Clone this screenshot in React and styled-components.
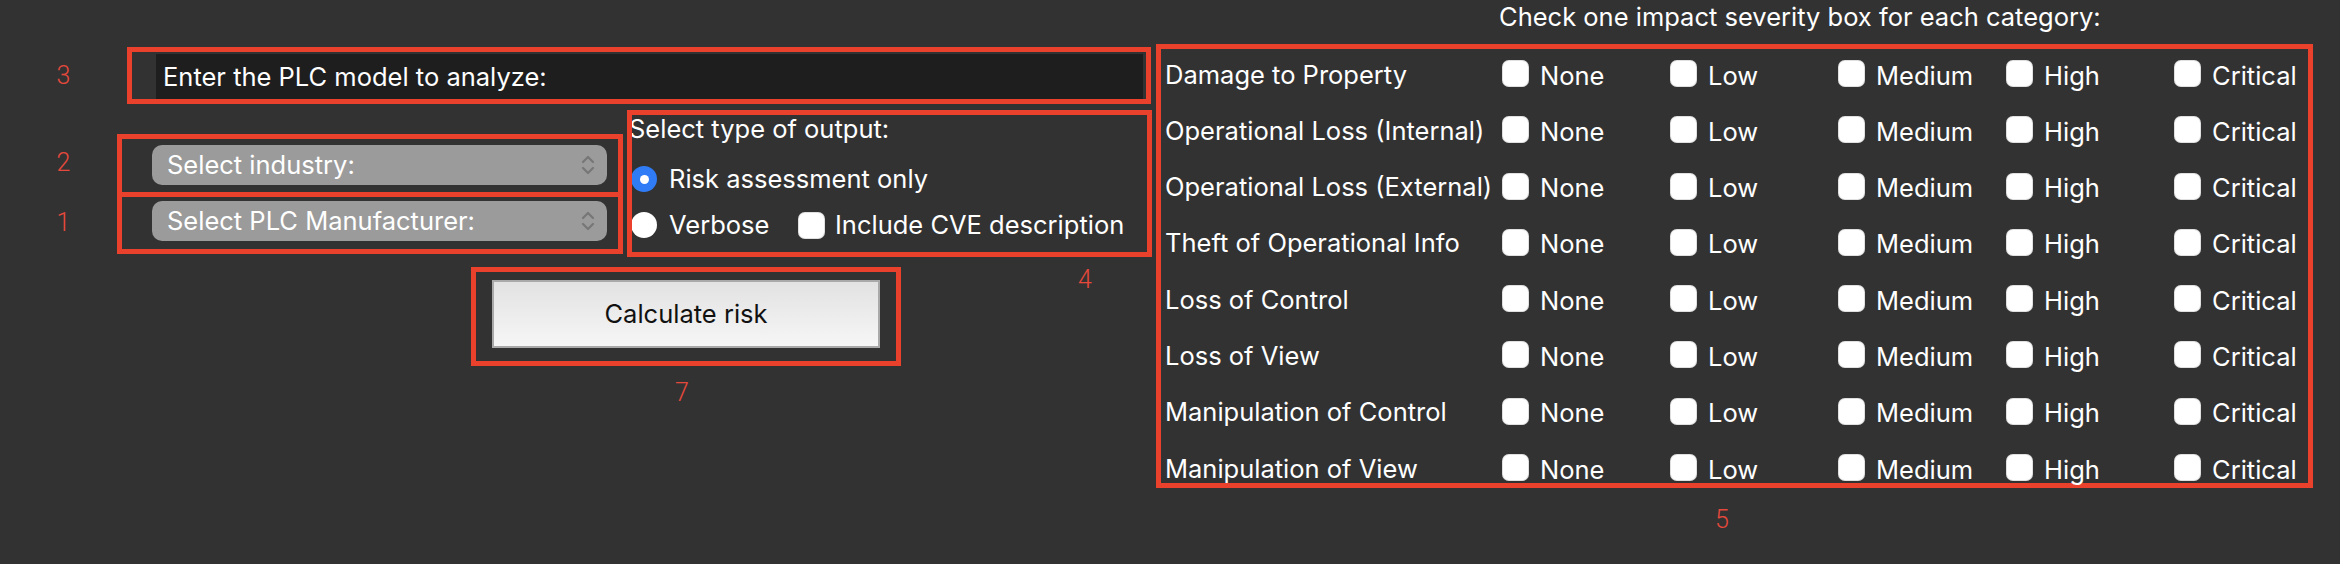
import React from "react";
import styled, { createGlobalStyle } from "styled-components";

const RED = "#e9412b";

const GlobalStyle = createGlobalStyle`
  html, body { margin: 0; padding: 0; background: #323232; }
  body {
    width: 2340px; height: 564px; overflow: hidden;
    font-family: Inter, "Noto Sans", sans-serif; font-size: 25.5px; color: #fff;
  }
  * { box-sizing: border-box; }
`;

const Page = styled.div`
  display: flex;
  align-items: flex-start;
  width: 2340px;
  height: 564px;
`;

const LeftPanel = styled.div`
  flex: none;
  width: 1156px;
  display: flex;
  flex-direction: column;
  padding-top: 47px;
`;

const RightPanel = styled.div`
  flex: none;
  width: 1157px;
  display: flex;
  flex-direction: column;
`;

const Row = styled.div`
  display: flex;
  align-items: ${(p) => p.$align || "flex-start"};
  margin-top: ${(p) => p.$mt || 0}px;
`;

const Stack = styled.div`
  flex: none;
  display: flex;
  flex-direction: column;
  width: ${(p) => p.$w}px;
  padding-top: ${(p) => p.$pt || 0}px;
`;

const NumLabel = styled.div`
  flex: none;
  width: ${(p) => p.$w || 30}px;
  margin-left: ${(p) => p.$ml || 0}px;
  margin-top: ${(p) => p.$mt || 0}px;
  padding-left: ${(p) => p.$pl || 0}px;
  text-align: center;
  font-family: Roboto, "Liberation Sans", sans-serif;
  font-weight: 300;
  font-size: 25px;
  line-height: 26px;
  color: #e6493c;
`;

const RedBox = styled.div`
  flex: none;
  width: ${(p) => p.$w}px;
  height: ${(p) => p.$h}px;
  border: 5px solid ${RED};
  ${(p) => (p.$noBottom ? "border-bottom: none;" : "")}
`;

const FieldBox = styled(RedBox)`
  padding: 2px 3px 0 24px;
`;

const TextField = styled.div`
  height: 45px;
  background: #1e1e1e;
  display: flex;
  align-items: center;
  padding-left: 7px;
  line-height: 26px;
`;

const SelectBox = styled(RedBox)`
  padding: ${(p) => p.$pt}px 11px 0 30px;
`;

const Select = styled.div`
  height: 40px;
  border-radius: 10px;
  background: #9b9b9b;
  display: flex;
  align-items: center;
  justify-content: space-between;
  padding: 0 12px 0 15px;
  line-height: 26px;
`;

const OutputBox = styled(RedBox)`
  margin-left: 4px;
  overflow: hidden;
  display: flex;
  flex-direction: column;
`;

const BoxTitle = styled.div`
  line-height: 26px;
  margin-top: 1px;
  margin-left: -3px;
  white-space: nowrap;
`;

const OptionRow = styled.div`
  display: flex;
  align-items: center;
  height: 30px;
  margin-top: ${(p) => p.$mt}px;
  margin-left: -1px;
`;

const Choice = styled.div`
  flex: none;
  display: flex;
  align-items: center;
  gap: ${(p) => p.$gap || 12}px;
  width: ${(p) => (p.$w ? p.$w + "px" : "auto")};
  white-space: nowrap;
  line-height: 26px;
`;

const Radio = styled.span`
  flex: none;
  width: 26px;
  height: 26px;
  border-radius: 50%;
  background: ${(p) => (p.$on ? "#2f7cf6" : "#ffffff")};
  display: flex;
  align-items: center;
  justify-content: center;
  &::after {
    content: "";
    display: ${(p) => (p.$on ? "block" : "none")};
    width: 9px;
    height: 9px;
    border-radius: 50%;
    background: #fff;
  }
`;

const Check = styled.span`
  flex: none;
  width: 27px;
  height: 27px;
  border-radius: 7px;
  background: #fff;
  box-shadow: inset 0 0 0 1px rgba(0, 0, 0, 0.12);
`;

const ButtonBox = styled(RedBox)`
  margin-left: 471px;
  display: flex;
  justify-content: center;
  padding-top: 8px;
`;

const Button = styled.div`
  width: 388px;
  height: 68px;
  border: 2px solid #a9a9a9;
  background: linear-gradient(#e2e2e2, #f6f6f6);
  color: #111;
  display: flex;
  align-items: center;
  justify-content: center;
  line-height: 26px;
`;

const Title = styled.div`
  margin-top: 4px;
  padding-left: 343px;
  line-height: 26px;
  white-space: nowrap;
`;

const ImpactBox = styled(RedBox)`
  margin-top: 14px;
  display: grid;
  grid-template-columns: 337px repeat(4, 168px) 1fr;
  grid-auto-rows: 42px;
  row-gap: 14.3px;
  padding: 3.5px 0 0 4px;
  align-items: center;
`;

const CatLabel = styled.div`
  line-height: 26px;
  white-space: nowrap;
  position: relative;
  top: 1px;
`;

const Option = styled.div`
  display: flex;
  align-items: center;
  gap: 11px;
  line-height: 26px;
  white-space: nowrap;
  & > span:last-child {
    position: relative;
    top: 2px;
  }
`;

const Chevrons = () => (
  <svg width="14" height="24" viewBox="0 0 14 24" fill="none">
    <path d="M2 9 L7 4 L12 9" stroke="#777" strokeWidth="2.2" strokeLinecap="round" strokeLinejoin="round" />
    <path d="M2 15 L7 20 L12 15" stroke="#777" strokeWidth="2.2" strokeLinecap="round" strokeLinejoin="round" />
  </svg>
);

const categories = [
  "Damage to Property",
  "Operational Loss (Internal)",
  "Operational Loss (External)",
  "Theft of Operational Info",
  "Loss of Control",
  "Loss of View",
  "Manipulation of Control",
  "Manipulation of View",
];

const levels = ["None", "Low", "Medium", "High", "Critical"];

export default function App() {
  return (
    <>
      <GlobalStyle />
      <Page>
        <LeftPanel>
          <Row $align="center">
            <NumLabel $w={127}>3</NumLabel>
            <FieldBox $w={1024} $h={57}>
              <TextField>Enter the PLC model to analyze:</TextField>
            </FieldBox>
          </Row>

          <Row $mt={6}>
            <Stack $w={623} $pt={24}>
              <Row $align="center">
                <NumLabel $w={117} $pl={10}>2</NumLabel>
                <SelectBox $w={506} $h={58} $pt={6} $noBottom>
                  <Select>
                    <span>Select industry:</span>
                    <Chevrons />
                  </Select>
                </SelectBox>
              </Row>
              <Row $align="center">
                <NumLabel $w={117} $pl={10}>1</NumLabel>
                <SelectBox $w={506} $h={62} $pt={4}>
                  <Select>
                    <span>Select PLC Manufacturer:</span>
                    <Chevrons />
                  </Select>
                </SelectBox>
              </Row>
            </Stack>

            <OutputBox $w={525} $h={147}>
              <BoxTitle>Select type of output:</BoxTitle>
              <OptionRow $mt={22}>
                <Choice>
                  <Radio $on />
                  <span>Risk assessment only</span>
                </Choice>
              </OptionRow>
              <OptionRow $mt={16}>
                <Choice $w={167}>
                  <Radio />
                  <span>Verbose</span>
                </Choice>
                <Choice $gap={10}>
                  <Check />
                  <span>Include CVE description</span>
                </Choice>
              </OptionRow>
            </OutputBox>
          </Row>

          <Row $mt={10}>
            <ButtonBox $w={430} $h={99}>
              <Button>Calculate risk</Button>
            </ButtonBox>
            <NumLabel $ml={169} $mt={0}>4</NumLabel>
          </Row>

          <Row $mt={14}>
            <NumLabel $ml={667}>7</NumLabel>
          </Row>
        </LeftPanel>

        <RightPanel>
          <Title>Check one impact severity box for each category:</Title>
          <ImpactBox $w={1157} $h={444}>
            {categories.map((c) => (
              <React.Fragment key={c}>
                <CatLabel>{c}</CatLabel>
                {levels.map((l) => (
                  <Option key={l}>
                    <Check />
                    <span>{l}</span>
                  </Option>
                ))}
              </React.Fragment>
            ))}
          </ImpactBox>
          <Row $mt={19}>
            <NumLabel $ml={551}>5</NumLabel>
          </Row>
        </RightPanel>
      </Page>
    </>
  );
}
